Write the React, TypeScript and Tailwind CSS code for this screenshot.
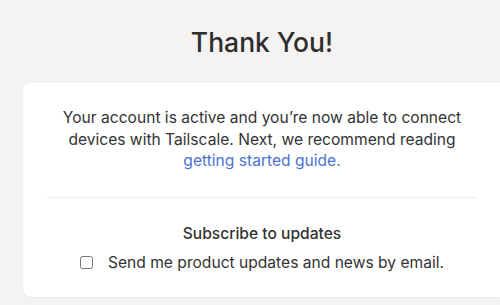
export default function App() {
  return (
    <div
      className="min-h-[305px] bg-[#f4f3f1] text-[#2f2f2f] overflow-hidden"
      style={{ fontFamily: 'Inter, "Noto Sans", sans-serif' }}
    >
      <div className="ml-[23px] w-[478px]">
        {/* Header */}
        <h1 className="pt-[25px] text-center text-[26.5px] leading-[34px] font-medium text-[#2e2e2e]">
          Thank You!
        </h1>

        {/* Card */}
        <div className="mt-[24px] bg-white rounded-l-lg shadow-[0_1px_2px_rgba(0,0,0,0.04)] px-[24px] pt-[24px] pb-[23px]">
          <p className="mx-auto max-w-[420px] text-center text-[15.6px] leading-[21.5px] text-[#333]">
            Your account is active and you’re now able to connect devices with Tailscale. Next, we
            recommend reading{' '}
            <a href="#" className="text-[#4b72d0]">
              getting started guide.
            </a>
          </p>

          <div className="mt-[25px] border-t border-[#ebebeb]" />

          <div className="pt-[25px] text-center">
            <h2 className="text-[15.6px] leading-[22px] font-medium text-[#333]">Subscribe to updates</h2>
            <label className="mt-[7px] flex items-center justify-center gap-[15px] text-[15.6px] leading-[22px] text-[#333]">
              <input type="checkbox" className="w-[13px] h-[13px]" />
              <span>Send me product updates and news by email.</span>
            </label>
          </div>
        </div>
      </div>
    </div>
  )
}
